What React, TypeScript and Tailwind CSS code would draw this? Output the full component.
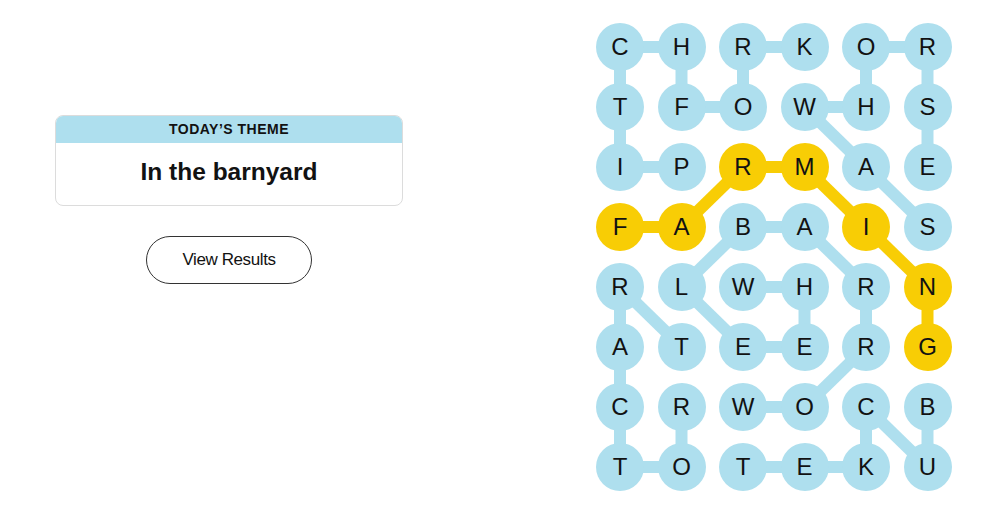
import React from "react";

const BLUE = "#aedfee";
const YELLOW = "#f8cd05";

const letters: string[] = [
    "CHRKOR",
    "TFOWHS",
    "IPRMAE",
    "FABAIS",
    "RLWHRN",
    "ATEERG",
    "CRWOCB",
    "TOTEKU",
];

// cells of the spangram, as "col,row"
const spangram = ["0,3", "1,3", "2,2", "3,2", "4,3", "5,4", "5,5"];

// [col, row, col, row]
const blueLinks: number[][] = [
    [0, 0, 1, 0], [0, 0, 0, 1], [0, 1, 0, 2], [0, 2, 1, 2],
    [1, 0, 1, 1], [1, 1, 2, 1], [2, 0, 2, 1], [2, 0, 3, 0],
    [4, 0, 5, 0], [4, 0, 4, 1], [3, 1, 4, 1], [3, 1, 4, 2],
    [4, 2, 5, 3], [5, 0, 5, 1], [5, 1, 5, 2],
    [2, 3, 3, 3], [2, 3, 1, 4], [3, 3, 4, 4], [1, 4, 2, 5],
    [2, 5, 3, 5], [3, 5, 3, 4], [3, 4, 2, 4], [4, 4, 4, 5],
    [4, 5, 3, 6], [3, 6, 2, 6], [0, 4, 1, 5], [0, 4, 0, 5],
    [0, 5, 0, 6], [0, 6, 0, 7], [0, 7, 1, 7], [1, 7, 1, 6],
    [2, 7, 3, 7], [3, 7, 4, 7], [4, 7, 4, 6], [4, 6, 5, 7],
    [5, 7, 5, 6],
];

const yellowLinks: number[][] = [
    [0, 3, 1, 3], [1, 3, 2, 2], [2, 2, 3, 2], [3, 2, 4, 3],
    [4, 3, 5, 4], [5, 4, 5, 5],
];

const cx = (c: number) => 24 + 61.5 * c;
const cy = (r: number) => 24 + 60 * r;

const Board: React.FC = () => {
    return (
        <div className="relative w-[355.5px] h-[468px]">
            <svg className="absolute inset-0" width="355.5" height="468">
                {blueLinks.map(([c1, r1, c2, r2], i) => (
                    <line key={"b" + i} x1={cx(c1)} y1={cy(r1)} x2={cx(c2)} y2={cy(r2)} stroke={BLUE} strokeWidth={12} />
                ))}
                {yellowLinks.map(([c1, r1, c2, r2], i) => (
                    <line key={"y" + i} x1={cx(c1)} y1={cy(r1)} x2={cx(c2)} y2={cy(r2)} stroke={YELLOW} strokeWidth={12} />
                ))}
            </svg>
            <div className="relative grid grid-cols-[repeat(6,48px)] gap-x-[13.5px] gap-y-[12px]">
                {letters.map((row, r) =>
                    row.split("").map((ch, c) => {
                        const found = spangram.includes(c + "," + r);
                        return (
                            <div
                                key={r + "-" + c}
                                className={
                                    "w-12 h-12 rounded-full flex items-center justify-center text-[24px] text-[#121212] " +
                                    (found ? "bg-[#f8cd05]" : "bg-[#aedfee]")
                                }
                            >
                                {ch}
                            </div>
                        );
                    })
                )}
            </div>
        </div>
    );
};

const App: React.FC = () => {
    return (
        <div
            className="w-[1000px] h-[529px] bg-white flex text-[#121212]"
            style={{ fontFamily: "'Liberation Sans', Arial, sans-serif" }}
        >
            {/* Theme + results */}
            <section className="w-[596px] pl-[55px] pt-[115px] flex flex-col items-start">
                <div className="w-[348px] border border-[#dcdcdc] rounded-lg overflow-hidden">
                    <div className="bg-[#aedfee] h-[27px] flex items-center justify-center text-[14px] font-bold tracking-[0.5px] uppercase">
                        Today’s Theme
                    </div>
                    <div className="h-[62px] pb-[4px] flex items-center justify-center text-[24.5px] font-bold">
                        In the barnyard
                    </div>
                </div>
                <button
                    type="button"
                    className="mt-[30px] ml-[91px] w-[166px] h-[48px] rounded-full border border-[#333] text-[17px] tracking-[-0.4px] text-[#121212] bg-white"
                >
                    View Results
                </button>
            </section>

            {/* Letter board */}
            <section className="pt-[23px]">
                <Board />
            </section>
        </div>
    );
};

export default App;
